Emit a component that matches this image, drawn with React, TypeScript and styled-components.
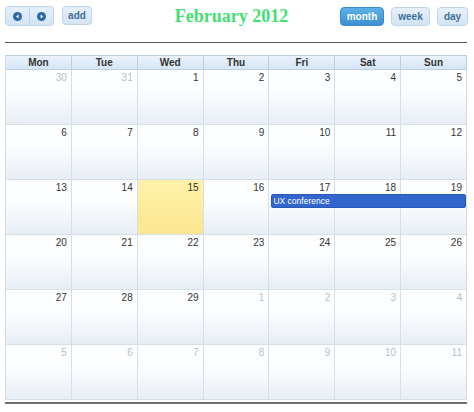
import React from "react";
import styled, { createGlobalStyle } from "styled-components";

const Global = createGlobalStyle`
  html, body { margin: 0; padding: 0; background: #ffffff; }
  body { font-family: "Liberation Sans", Arial, sans-serif; }
`;

const Page = styled.div`
  width: 463px;
  padding: 6px 0 0 5px;
`;

const Toolbar = styled.div`
  display: grid;
  grid-template-columns: 1fr auto 1fr;
  align-items: center;
  height: 19px;
`;

const Left = styled.div`
  display: flex;
  gap: 8px;
`;

const Right = styled.div`
  display: flex;
  gap: 7px;
  justify-content: flex-end;
`;

const Title = styled.h2`
  margin: 0 10px 0 0;
  font-family: "Liberation Serif", Georgia, serif;
  font-weight: bold;
  font-size: 18px;
  line-height: 19px;
  color: #42e072;
`;

const Group = styled.div`
  display: flex;
  height: 18px;
  border: 1px solid #bed4ea;
  border-radius: 4px;
  overflow: hidden;
  background: linear-gradient(#e6f0fa, #d3e4f4);
`;

const NavBtn = styled.div<{ $divider?: boolean }>`
  width: 23px;
  display: flex;
  align-items: center;
  justify-content: center;
  border-left: ${(p) => (p.$divider ? "1px solid #bed4ea" : "none")};
`;

const Button = styled.div<{ $active?: boolean; $w: number }>`
  box-sizing: border-box;
  width: ${(p) => p.$w}px;
  height: 19px;
  display: flex;
  align-items: center;
  justify-content: center;
  border-radius: 4px;
  font-size: 10px;
  font-weight: bold;
  border: 1px solid ${(p) => (p.$active ? "#3b8ccd" : "#bed4ea")};
  background: ${(p) =>
    p.$active
      ? "linear-gradient(#5db0e6, #3d8fd2)"
      : "linear-gradient(#e6f0fa, #d3e4f4)"};
  color: ${(p) => (p.$active ? "#ffffff" : "#3f6f9c")};
`;

const Rule = styled.div<{ $thick?: boolean }>`
  width: 462px;
  height: ${(p) => (p.$thick ? 2 : 1)}px;
  background: ${(p) => (p.$thick ? "#6f6f6f" : "#555555")};
`;

const TopRule = styled(Rule)`
  margin-top: 17px;
`;

const BottomRule = styled(Rule)`
  margin-top: 2px;
`;

const Calendar = styled.div`
  width: 462px;
  margin-top: 12px;
  box-sizing: border-box;
  border-left: 1px solid #d6dee7;
`;

const HeadRow = styled.div`
  display: grid;
  grid-template-columns: repeat(7, 1fr);
  height: 15px;
  box-sizing: border-box;
  border-top: 1px solid #b8d0e6;
  border-bottom: 1px solid #b8d0e6;
  background: linear-gradient(#eaf2fb, #d6e6f5);
`;

const HeadCell = styled.div`
  border-right: 1px solid #b8d0e6;
  text-align: center;
  font-size: 10px;
  font-weight: bold;
  line-height: 13px;
  color: #333333;
`;

const Week = styled.div`
  display: grid;
  grid-template-columns: repeat(7, 1fr);
  grid-template-rows: 13px 1fr;
  height: 55px;
`;

const Day = styled.div<{ $col: number; $other?: boolean; $today?: boolean }>`
  grid-column: ${(p) => p.$col};
  grid-row: 1 / 3;
  box-sizing: border-box;
  border-right: 1px solid #d6dee7;
  border-bottom: 1px solid #d6dee7;
  background: ${(p) =>
    p.$today
      ? "linear-gradient(#fff2a8, #fbe691)"
      : "linear-gradient(#fdfeff 35%, #e8eef5 100%)"};
  text-align: right;
  padding: 2px 4px 0 0;
  font-size: 10px;
  line-height: 12px;
  color: ${(p) => (p.$other ? "#b9bdc2" : "#333333")};
`;

const Event = styled.div<{ $from: number; $to: number }>`
  grid-column: ${(p) => p.$from} / ${(p) => p.$to};
  grid-row: 2;
  z-index: 1;
  align-self: start;
  margin: 1px 1px 0 2px;
  height: 14px;
  box-sizing: border-box;
  background: #3366cc;
  border: 1px solid #2a58b8;
  border-radius: 2px;
  color: #ffffff;
  font-size: 8.5px;
  line-height: 12px;
  padding-left: 1px;
`;

const Arrow = ({ dir }: { dir: "l" | "r" }) => (
  <svg width="9" height="9" viewBox="0 0 9 9">
    <circle cx="4.5" cy="4.5" r="4.5" fill="#2c6aa6" />
    {dir === "l" ? (
      <path d="M5.6 2.6 L3 4.5 L5.6 6.4 Z" fill="#ffffff" />
    ) : (
      <path d="M3.6 2.6 L6.2 4.5 L3.6 6.4 Z" fill="#ffffff" />
    )}
  </svg>
);

const dayNames = ["Mon", "Tue", "Wed", "Thu", "Fri", "Sat", "Sun"];

type Cell = { n: number; other?: boolean; today?: boolean };

const buildWeeks = (): Cell[][] => {
  const cells: Cell[] = [];
  cells.push({ n: 30, other: true }, { n: 31, other: true });
  for (let i = 1; i <= 29; i++) cells.push({ n: i, today: i === 15 });
  for (let i = 1; cells.length < 42; i++) cells.push({ n: i, other: true });
  const weeks: Cell[][] = [];
  for (let w = 0; w < 6; w++) weeks.push(cells.slice(w * 7, w * 7 + 7));
  return weeks;
};

export default function App() {
  const weeks = buildWeeks();
  return (
    <>
      <Global />
      <Page>
        <Toolbar>
          <Left>
            <Group>
              <NavBtn>
                <Arrow dir="l" />
              </NavBtn>
              <NavBtn $divider>
                <Arrow dir="r" />
              </NavBtn>
            </Group>
            <Button $w={30}>add</Button>
          </Left>
          <Title>February 2012</Title>
          <Right>
            <Button $w={44} $active>
              month
            </Button>
            <Button $w={39}>week</Button>
            <Button $w={31}>day</Button>
          </Right>
        </Toolbar>
        <TopRule />
        <Calendar>
          <HeadRow>
            {dayNames.map((d) => (
              <HeadCell key={d}>{d}</HeadCell>
            ))}
          </HeadRow>
          {weeks.map((wk, wi) => (
            <Week key={wi}>
              {wk.map((c, ci) => (
                <Day key={ci} $col={ci + 1} $other={c.other} $today={c.today}>
                  {c.n}
                </Day>
              ))}
              {wi === 2 && (
                <Event $from={5} $to={8}>
                  UX conference
                </Event>
              )}
            </Week>
          ))}
        </Calendar>
        <BottomRule $thick />
      </Page>
    </>
  );
}
